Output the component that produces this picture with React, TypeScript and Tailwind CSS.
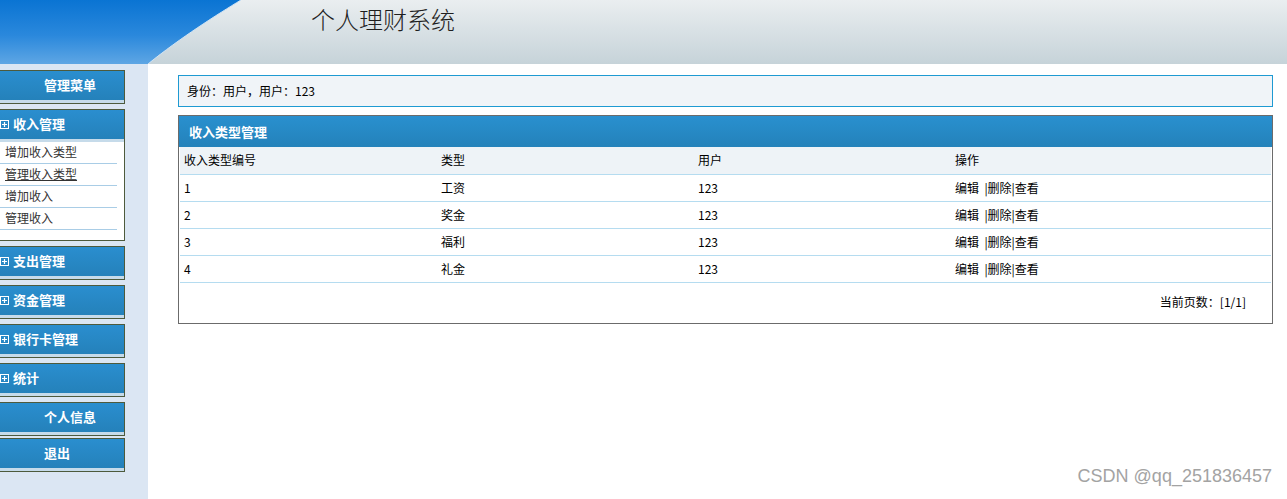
import React from "react";

type Row = { id: string; kind: string; user: string };

const rows: Row[] = [
  { id: "1", kind: "工资", user: "123" },
  { id: "2", kind: "奖金", user: "123" },
  { id: "3", kind: "福利", user: "123" },
  { id: "4", kind: "礼金", user: "123" },
];

const font = { fontFamily: '"Noto Sans CJK SC", "Liberation Sans", sans-serif' };

const PlusBox = () => (
  <svg width="9" height="9" viewBox="0 0 9 9" className="shrink-0">
    <rect x="0.5" y="0.5" width="8" height="8" fill="none" stroke="#ffffff" />
    <path d="M2 4.5H7M4.5 2V7" stroke="#ffffff" strokeWidth="1.2" />
  </svg>
);

const MenuButton = ({
  label,
  plus,
}: {
  label: string;
  plus?: boolean;
}) => (
  <div className="flex h-[34px] w-[125px] items-center border border-l-0 border-[#4d5a3c] bg-gradient-to-b from-[#2a8ecf] to-[#2480b8] pb-[4px] shadow-[inset_0_-3px_0_#c6dbea]">
    {plus ? (
      <div className="flex items-center gap-[4px] text-[13px] font-bold text-white">
        <PlusBox />
        <span>{label}</span>
      </div>
    ) : (
      <div className="w-full pl-[44px] text-[13px] font-bold text-white">{label}</div>
    )}
  </div>
);

const Sidebar = () => (
  <div className="flex w-[148px] shrink-0 flex-col bg-[#dbe6f3] pt-[6px]">
    <MenuButton label="管理菜单" />
    <div className="mt-[5px] w-[125px] border border-l-0 border-[#4d5a3c] bg-white">
      <div className="flex h-[32px] items-center gap-[4px] bg-gradient-to-b from-[#2a8ecf] to-[#2480b8] pb-[4px] text-[13px] font-bold text-white shadow-[inset_0_-3px_0_#c6dbea]">
        <PlusBox />
        <span>收入管理</span>
      </div>
      <div className="flex flex-col pb-[10px] text-[12px] text-[#333]">
        {["增加收入类型", "管理收入类型", "增加收入", "管理收入"].map((item, i) => (
          <div
            key={item}
            className="flex h-[22px] w-[117px] items-center border-b border-[#a9cde6] pb-[2px] pl-[5px]"
          >
            <span className={i === 1 ? "underline" : ""}>{item}</span>
          </div>
        ))}
      </div>
    </div>
    <div className="mt-[5px] flex flex-col gap-[5px]">
      <MenuButton label="支出管理" plus />
      <MenuButton label="资金管理" plus />
      <MenuButton label="银行卡管理" plus />
      <MenuButton label="统计" plus />
      <MenuButton label="个人信息" />
    </div>
    <div className="mt-[2px]">
      <MenuButton label="退出" />
    </div>
  </div>
);

const Header = () => (
  <div className="relative h-[64px] w-full bg-gradient-to-b from-[#eaeef0] to-[#c6d3d9]">
    <svg
      width="250"
      height="64"
      viewBox="0 0 250 64"
      className="absolute left-0 top-0"
    >
      <defs>
        <linearGradient id="hdrBlue" x1="0" y1="0" x2="0" y2="1">
          <stop offset="0" stopColor="#0a74d3" />
          <stop offset="0.55" stopColor="#2a88dc" />
          <stop offset="1" stopColor="#5ea6e4" />
        </linearGradient>
      </defs>
      <path d="M0 0H241C218 14 180 38 148 64H0Z" fill="url(#hdrBlue)" />
      <path d="M241 0C218 14 180 38 148 64" fill="none" stroke="#cfe3f4" strokeWidth="1" />
    </svg>
    <div className="absolute left-[311px] top-[1px] text-[24px] font-light text-[#1e1e1e]">
      个人理财系统
    </div>
  </div>
);

const IncomeTypeTable = () => (
  <div className="mt-[8px] border border-[#6b6b6b] bg-white">
    <div className="flex h-[31px] items-center bg-gradient-to-b from-[#2990cf] to-[#2482ba] pl-[10px] text-[13px] font-bold text-white">
      收入类型管理
    </div>
    <div className="px-[1px] text-[12px] text-black">
      <div className="grid h-[28px] grid-cols-[257px_257px_257px_1fr] items-center border-b border-[#b5dcf0] bg-[#eef3f7] pb-[2px] pl-[4px]">
        <span>收入类型编号</span>
        <span>类型</span>
        <span>用户</span>
        <span>操作</span>
      </div>
      {rows.map((r) => (
        <div
          key={r.id}
          className="grid h-[27px] grid-cols-[257px_257px_257px_1fr] items-center border-b border-[#b5dcf0] pb-[1px] pl-[4px]"
        >
          <span>{r.id}</span>
          <span>{r.kind}</span>
          <span>{r.user}</span>
          <span>编辑&nbsp;&nbsp;|删除|查看</span>
        </div>
      ))}
      <div className="flex h-[40px] items-center justify-end pb-[2px] pr-[25px]">
        当前页数：[1/1]
      </div>
    </div>
  </div>
);

export default function App() {
  return (
    <div className="relative h-[499px] w-[1287px] overflow-hidden bg-white" style={font}>
      <Header />
      <div className="flex h-[435px]">
        <Sidebar />
        <div className="flex-1 pl-[30px] pr-[14px] pt-[11px]">
          <div className="flex h-[32px] items-center border border-[#1e9ad2] bg-[#f0f4f8] pb-[1px] pl-[8px] text-[12px] text-black">
            身份：用户，用户：123
          </div>
          <IncomeTypeTable />
        </div>
      </div>
      <div
        className="absolute bottom-[9px] right-[15px] text-[18px] text-[#a3a3a3]"
        style={{ fontFamily: '"Liberation Sans", Arial, sans-serif' }}
      >
        CSDN @qq_251836457
      </div>
    </div>
  );
}
